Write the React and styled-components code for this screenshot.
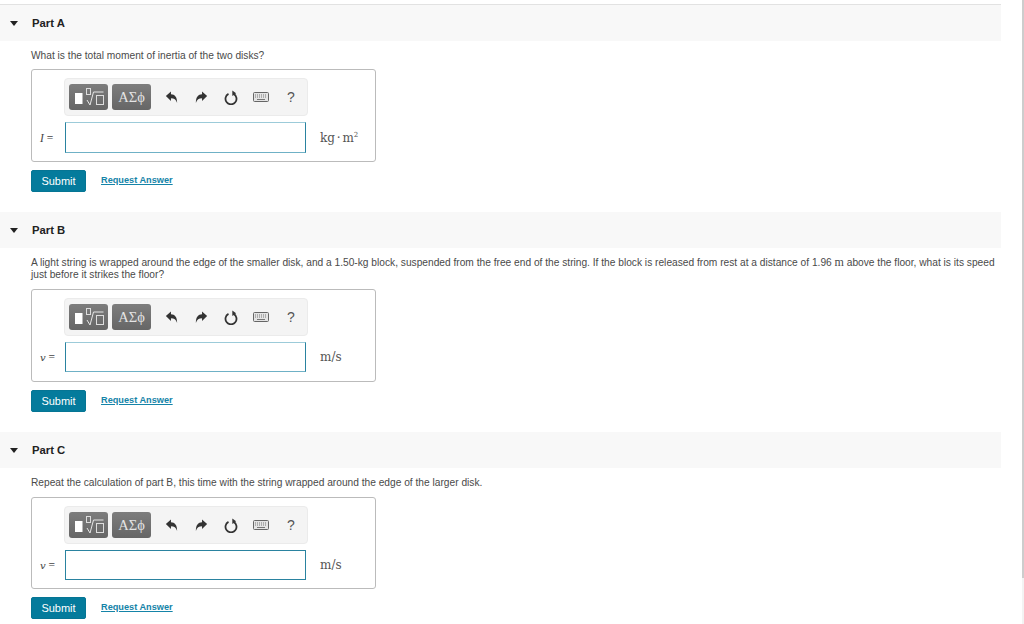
import React from 'react';
import styled, { createGlobalStyle } from 'styled-components';

const GlobalStyle = createGlobalStyle`
  html, body {
    margin: 0;
    padding: 0;
    background: #fff;
    overflow: hidden;
  }
  * { box-sizing: border-box; }
`;

const Page = styled.div`
  position: relative;
  width: 1024px;
  height: 624px;
  overflow: hidden;
  padding-top: 4px;
  font-family: "Liberation Sans", Arial, sans-serif;
`;

// the page's own scrollbar, sits over the right edge
const ScrollTrack = styled.div`
  position: absolute;
  top: 0;
  right: 0;
  width: 2px;
  height: 624px;
  background: #f3f3f3;
`;

const ScrollThumb = styled.div`
  width: 2px;
  height: 578px;
  background: #cdcdcd;
`;

const Part = styled.section`
  width: 1001px;
  height: ${(p) => p.$height}px;
`;

const PartHeader = styled.div`
  height: ${(p) => (p.$first ? 37 : 36)}px;
  background: #f8f8f8;
  border-top: ${(p) => (p.$first ? '1px solid #e2e2e2' : 'none')};
  display: flex;
  align-items: center;
  padding-left: 10px;
`;

const Caret = styled.span`
  width: 0;
  height: 0;
  border-left: 4.5px solid transparent;
  border-right: 4.5px solid transparent;
  border-top: 5px solid #222;
  margin-right: 14px;
`;

const PartTitle = styled.h2`
  margin: 0;
  font-size: 11.3px;
  font-weight: bold;
  color: #222;
`;

const Body = styled.div`
  padding: 9px 0 0 31px;
`;

const Question = styled.p`
  width: 970px;
  margin: 0 0 ${(p) => p.$gap}px;
  font-size: 10.2px;
  line-height: 12px;
  color: #4a4a4a;
`;

const Unit = styled.span`
  font-family: "Liberation Serif", serif;
  font-size: 12px;
  line-height: 0;
`;

const AnswerBox = styled.div`
  width: 345px;
  height: ${(p) => p.$height}px;
  border: 1px solid #bbb;
  border-radius: 3px;
  padding: 8px 0 0 32px;
`;

const Toolbar = styled.div`
  width: 244px;
  height: 38px;
  background: #f4f4f4;
  border: 1px solid #ebebeb;
  border-radius: 4px;
  display: flex;
  align-items: center;
  padding-left: 4px;
`;

const MathButton = styled.div`
  width: 39px;
  height: 26px;
  border-radius: 3px;
  background: linear-gradient(#7d7d7d, #666);
  margin-right: 4px;
  display: flex;
  align-items: center;
  justify-content: center;
  color: #e4e4e4;
  font-family: "Liberation Serif", serif;
  font-size: 14.5px;
  & + & { margin-right: 5px; }
`;

const ToolIcon = styled.span`
  width: 30px;
  display: flex;
  justify-content: center;
  align-items: center;
  color: #555;
  font-size: 14px;
`;

const InputRow = styled.div`
  display: flex;
  align-items: center;
  margin: 6px 0 0 -32px;
`;

const VarLabel = styled.span`
  width: 33px;
  padding-left: 8px;
  font-family: "Liberation Serif", serif;
  font-size: 11.5px;
  color: #444;
  i {
    font-family: ${(p) => (p.$curly ? '"DejaVu Serif", serif' : 'inherit')};
    font-size: ${(p) => (p.$curly ? '10px' : 'inherit')};
    font-style: italic;
  }
`;

const AnswerInput = styled.div`
  width: 241px;
  height: ${(p) => p.$height}px;
  border: 1px solid #2a83a0;
  border-top-color: ${(p) => (p.$soft ? '#9ccbd9' : '#2a83a0')};
  border-bottom-color: ${(p) => (p.$soft ? '#6fb1c6' : '#2a83a0')};
`;

const UnitLabel = styled.span`
  margin-left: 14px;
  font-family: "DejaVu Serif", serif;
  font-size: 12px;
  word-spacing: -2px;
  color: #555;
  sup { font-size: 7px; line-height: 0; }
`;

const Actions = styled.div`
  display: flex;
  align-items: flex-start;
  margin-top: 8px;
`;

const Submit = styled.button`
  width: 55px;
  height: 22px;
  padding: 0;
  background: #047b9c;
  border: 1px solid #057594;
  border-radius: 2px;
  color: #fff;
  font: 11px "Liberation Sans", Arial, sans-serif;
`;

const RequestLink = styled.a`
  margin: 4px 0 0 15px;
  font-size: 9.2px;
  font-weight: bold;
  line-height: 12px;
  color: #1584a8;
  text-decoration: underline;
`;

const RadicalIcon = () => (
  <svg width="39" height="26" viewBox="0 0 39 26">
    <rect x="6" y="9" width="7.5" height="11" fill="#fff" />
    <rect x="17.500" y="4.500" width="4" height="6" fill="none" stroke="#ddd" />
    <path d="M18 16l3 5 3.500-13H34.500" fill="none" stroke="#e6e6e6" />
    <rect x="27.500" y="11.500" width="7" height="9" fill="none" stroke="#ddd" />
  </svg>
);

const UndoIcon = ({ flip }) => (
  <svg width="13" height="13" viewBox="0 0 12 12" style={flip ? { transform: 'scaleX(-1)' } : undefined}>
    <path d="M.8 4.500L5.500 .4v2.600c3.600 0 5.700 2.600 5.700 8C10.200 8 8.400 6.800 5.500 6.800v2.400z" fill="#333" />
  </svg>
);

const ResetIcon = () => (
  <svg width="14" height="15" viewBox="0 0 14 15">
    <path d="M4.500 3.900a5.500 5.500 0 1 0 5 0" fill="none" stroke="#333" strokeWidth="1.800" />
    <path d="M8.300 .6v5.400l3.800-2.700z" fill="#333" />
  </svg>
);

const KeyboardIcon = () => (
  <svg width="16" height="10" viewBox="0 0 16 10">
    <rect x=".5" y=".5" width="15" height="9" rx="1" fill="#e4e4e4" stroke="#666" />
    <path d="M2 3h12M2 5h12" stroke="#777" strokeDasharray="1 1" />
    <path d="M4 7.500h8" stroke="#777" />
  </svg>
);

const AnswerTools = () => (
  <Toolbar>
    <MathButton><RadicalIcon /></MathButton>
    <MathButton>ΑΣϕ</MathButton>
    <ToolIcon><UndoIcon /></ToolIcon>
    <ToolIcon><UndoIcon flip /></ToolIcon>
    <ToolIcon><ResetIcon /></ToolIcon>
    <ToolIcon><KeyboardIcon /></ToolIcon>
    <ToolIcon>?</ToolIcon>
  </Toolbar>
);

const parts = [
  {
    name: 'Part A',
    height: 208,
    gap: 7,
    boxHeight: 93,
    inputHeight: 31,
    soft: true,
    label: 'I',
    unit: <>kg · m<sup>2</sup></>,
    question: 'What is the total moment of inertia of the two disks?',
  },
  {
    name: 'Part B',
    height: 220,
    gap: 8,
    boxHeight: 93,
    inputHeight: 30,
    soft: true,
    label: 'v',
    unit: 'm/s',
    question: (
      <>
        A light string is wrapped around the edge of the smaller disk, and a 1.50-kg block, suspended from the free end of the string. If the block is released from rest at a distance of 1.96 <Unit>m</Unit> above the floor, what is its speed just before it strikes the floor?
      </>
    ),
  },
  {
    name: 'Part C',
    height: 190,
    gap: 8,
    boxHeight: 92,
    inputHeight: 30,
    label: 'v',
    unit: 'm/s',
    question: 'Repeat the calculation of part B, this time with the string wrapped around the edge of the larger disk.',
  },
];

export default function App() {
  return (
    <Page>
      <GlobalStyle />
      {parts.map((part, i) => (
        <Part key={part.name} $height={part.height}>
          <PartHeader $first={i === 0}>
            <Caret />
            <PartTitle>{part.name}</PartTitle>
          </PartHeader>
          <Body>
            <Question $gap={part.gap}>{part.question}</Question>
            <AnswerBox $height={part.boxHeight}>
              <AnswerTools />
              <InputRow>
                <VarLabel $curly={part.label === 'v'}><i>{part.label}</i> =</VarLabel>
                <AnswerInput $soft={part.soft} $height={part.inputHeight} />
                <UnitLabel>{part.unit}</UnitLabel>
              </InputRow>
            </AnswerBox>
            <Actions>
              <Submit type="button">Submit</Submit>
              <RequestLink href="#">Request Answer</RequestLink>
            </Actions>
          </Body>
        </Part>
      ))}
      <ScrollTrack><ScrollThumb /></ScrollTrack>
    </Page>
  );
}
